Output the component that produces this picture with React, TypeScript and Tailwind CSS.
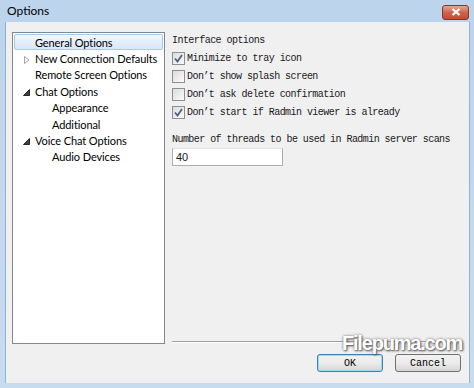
import { ReactNode } from 'react';

const tree: { label: string; level: number; arrow?: 'closed' | 'open'; selected?: boolean }[] = [
  { label: 'General Options', level: 0, selected: true },
  { label: 'New Connection Defaults', level: 0, arrow: 'closed' },
  { label: 'Remote Screen Options', level: 0 },
  { label: 'Chat Options', level: 0, arrow: 'open' },
  { label: 'Appearance', level: 1 },
  { label: 'Additional', level: 1 },
  { label: 'Voice Chat Options', level: 0, arrow: 'open' },
  { label: 'Audio Devices', level: 1 },
];

const checks = [
  { label: 'Minimize to tray icon', checked: true },
  { label: 'Don\u2019t show splash screen', checked: false },
  { label: 'Don\u2019t ask delete confirmation', checked: false },
  { label: 'Don\u2019t start if Radmin viewer is already', checked: true },
];

const Arrow = ({ kind }: { kind: 'closed' | 'open' }) =>
  kind === 'closed' ? (
    <svg width="6" height="8" viewBox="0 0 6 8" className="absolute left-[9px] top-[5px]">
      <path d="M0.5 0.5 L5 4 L0.5 7.5 Z" fill="#fff" stroke="#a6a6a6" />
    </svg>
  ) : (
    <svg width="7" height="7" viewBox="0 0 7 7" className="absolute left-[8px] top-[5px]">
      <path d="M6.5 0.5 L6.5 6.5 L0.5 6.5 Z" fill="#404040" stroke="#262626" />
    </svg>
  );

const Checkbox = ({ checked }: { checked: boolean }) => (
  <div className="w-[13px] h-[13px] border border-[#8e8f8f] bg-gradient-to-br from-[#dcdcdc] to-[#fbfbfb] flex items-center justify-center shrink-0">
    {checked && (
      <svg width="9" height="9" viewBox="0 0 9 9">
        <path d="M1 4.5 L3.5 7.5 L8 1" fill="none" stroke="#4d6185" strokeWidth="1.8" />
      </svg>
    )}
  </div>
);

const Button = ({ children, focused }: { children: ReactNode; focused?: boolean }) => (
  <div
    className={`w-[66px] h-[18px] rounded-[3px] border flex items-center justify-center text-[10px] text-black bg-gradient-to-b from-[#f2f2f2] via-[#ebebeb] to-[#d6d6d6] ${
      focused ? 'border-[#3c7fb1] shadow-[inset_0_0_0_1px_#9ddcf7]' : 'border-[#707070]'
    }`}
    style={{ fontFamily: '"Liberation Mono", monospace' }}
  >
    {children}
  </div>
);

export default function App() {
  return (
    <div className="w-[474px] h-[388px] flex flex-col bg-gradient-to-b from-[#bcd4ec] to-[#c8dcef] overflow-hidden">
      {/* title bar */}
      <div className="h-[22px] flex items-center justify-between pl-[7px] pr-[5px] shrink-0">
        <span className="text-[12px] text-black" style={{ fontFamily: 'Lato, sans-serif' }}>
          Options
        </span>
        <div className="w-[27px] h-[15px] mt-[2px] rounded-[3px] border border-[#7a3a32] bg-gradient-to-b from-[#e8a493] via-[#d0644c] to-[#c44a30] flex items-center justify-center">
          <svg width="10" height="8" viewBox="0 0 10 8">
            <path d="M1.5 1 L8.5 7 M8.5 1 L1.5 7" stroke="#fff" strokeWidth="2.2" />
          </svg>
        </div>
      </div>

      {/* client area */}
      <div className="relative flex-1 ml-[5px] mr-[4px] mb-[5px] bg-[#f0f0f0] border-l border-r border-[#8fb1d3] flex flex-col">
        <div className="flex flex-1 pt-[10px] pl-[6px] pr-[8px]">
          {/* tree */}
          <div
            className="w-[153px] h-[312px] bg-white border border-[#828790] pt-[1px] px-[1px] shrink-0"
            style={{ fontFamily: 'Lato, sans-serif' }}
          >
            {tree.map((t) => (
              <div
                key={t.label}
                className={`relative h-[16.4px] flex items-center text-[11px] tracking-[-0.1px] leading-none text-black whitespace-nowrap border ${
                  t.level === 0 ? 'pl-[20px]' : 'pl-[37px]'
                } ${
                  t.selected
                    ? 'border-[#a9c9ec] rounded-[2px] bg-gradient-to-b from-[#f2f7fe] to-[#d7e7fa]'
                    : 'border-transparent'
                }`}
              >
                {t.arrow && <Arrow kind={t.arrow} />}
                {t.label}
              </div>
            ))}
          </div>

          {/* right pane */}
          <div
            className="flex-1 flex flex-col pl-[7px] text-[10px] tracking-[-0.55px] text-[#1a1a1a]"
            style={{ fontFamily: '"Liberation Mono", monospace' }}
          >
            <div className="pt-[1px] h-[15px] flex items-center">Interface options</div>
            <div className="flex flex-col gap-[5px] mt-[5px]">
              {checks.map((c) => (
                <div key={c.label} className="flex items-center gap-[2px] h-[13px]">
                  <Checkbox checked={c.checked} />
                  <span>{c.label}</span>
                </div>
              ))}
            </div>
            <div className="mt-[14px] h-[12px] flex items-center">Number of threads to be used in Radmin server scans</div>
            <div
              className="mt-[3px] w-[111px] h-[18px] bg-white border border-[#abadb3] border-t-[#e3e3e3] flex items-center pl-[3px] text-[11px] tracking-normal"
              style={{ fontFamily: '"Liberation Sans", sans-serif' }}
            >
              40
            </div>
            <div className="flex-1" />
            <div className="h-[2px] mb-[1px] border-t border-[#a0a0a0] border-b border-b-white mr-[1px]" />
          </div>
        </div>

        {/* buttons */}
        <div className="h-[39px] flex justify-end items-start gap-[12px] pt-[10px] pr-[8px]">
          <Button focused>OK</Button>
          <Button>Cancel</Button>
        </div>

        {/* watermark */}
        <div
          className="absolute left-[336px] top-[311px] text-[20px] font-bold text-white tracking-[-1.2px] leading-none [text-shadow:1px_1px_2px_#555,0_0_3px_#777]"
          style={{ fontFamily: '"Liberation Sans", sans-serif' }}
        >
          Filepuma.com
        </div>
      </div>
    </div>
  );
}
